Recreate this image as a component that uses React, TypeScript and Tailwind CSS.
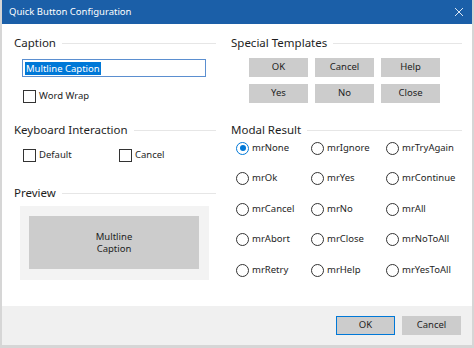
import React from "react";

const font = { fontFamily: '"Noto Sans", "Open Sans", sans-serif' };

const Header = ({ label }: { label: string }) => (
  <div className="flex items-center h-[18px]">
    <span className="text-[11.5px] text-[#1e1e1e] leading-none">{label}</span>
    <div className="flex-1 h-px bg-[#e6e6e6] ml-[6px]" />
  </div>
);

const Check = ({ label }: { label: string }) => (
  <div className="flex items-center h-[14px]">
    <div className="w-[13px] h-[13px] border border-[#333] bg-white" />
    <span className="ml-[3px] text-[9.5px] text-[#1e1e1e]">{label}</span>
  </div>
);

const Radio = ({ label, on }: { label: string; on?: boolean }) => (
  <div className="flex items-center h-[16px]">
    <div
      className={
        on
          ? "w-[13px] h-[13px] rounded-full border border-[#0078d7] flex items-center justify-center"
          : "w-[13px] h-[13px] rounded-full border border-[#333]"
      }
    >
      {on && <div className="w-[6px] h-[6px] rounded-full bg-[#0078d7]" />}
    </div>
    <span className="ml-[3px] text-[9.5px] text-[#1e1e1e]">{label}</span>
  </div>
);

const Btn = ({ label, focused }: { label: string; focused?: boolean }) => (
  <div
    className={
      focused
        ? "w-[59px] h-[19px] bg-[#cccccc] border border-[#0078d7] flex items-center justify-center text-[9.5px] text-[#1e1e1e]"
        : "w-[59px] h-[19px] bg-[#cccccc] flex items-center justify-center text-[9.5px] text-[#1e1e1e]"
    }
  >
    {label}
  </div>
);

const results = [
  ["mrNone", "mrIgnore", "mrTryAgain"],
  ["mrOk", "mrYes", "mrContinue"],
  ["mrCancel", "mrNo", "mrAll"],
  ["mrAbort", "mrClose", "mrNoToAll"],
  ["mrRetry", "mrHelp", "mrYesToAll"],
];

export default function App() {
  return (
    <div style={font} className="w-[474px] h-[348px] bg-white flex flex-col border-l-2 border-r-2 border-b-[3px] border-[#d6d6d6]">
      {/* Title bar */}
      <div className="h-[24px] bg-[#1b5fa8] flex items-center justify-between pl-[7px] pr-[8px]">
        <span className="text-white text-[9.5px]">Quick Button Configuration</span>
        <svg width="10" height="10" viewBox="0 0 10 10">
          <path d="M1 1 L9 9 M9 1 L1 9" stroke="#dbe6f3" strokeWidth="1" />
        </svg>
      </div>

      {/* Body */}
      <div className="h-[282px] flex pt-[10px] pl-[12px] pr-[10px]">
        {/* Left column */}
        <div className="w-[202px] flex flex-col">
          <Header label="Caption" />
          <div className="mt-[7px] ml-[8px] w-[184px] h-[18px] border border-[#5b8fd0] flex items-center pl-[2px]">
            <span className="bg-[#0078d7] text-white text-[9.5px] leading-[13px] px-px">Multline Caption</span>
          </div>
          <div className="mt-[12px] ml-[9px]">
            <Check label="Word Wrap" />
          </div>
          <div className="mt-[18px]">
            <Header label="Keyboard Interaction" />
          </div>
          <div className="mt-[9px] ml-[9px] flex">
            <div className="w-[96px]">
              <Check label="Default" />
            </div>
            <Check label="Cancel" />
          </div>
          <div className="mt-[22px]">
            <Header label="Preview" />
          </div>
          <div className="mt-[4px] ml-[6px] w-[189px] h-[74px] bg-[#f3f3f3] pt-[10px] pl-[9px]">
            <div className="w-[170px] h-[53px] bg-[#cccccc] flex items-center justify-center text-center text-[9.5px] leading-[12px] text-[#1e1e1e]">
              Multline
              <br />
              Caption
            </div>
          </div>
        </div>

        {/* Right column */}
        <div className="ml-[15px] flex-1 flex flex-col">
          <Header label="Special Templates" />
          <div className="mt-[6px] ml-[18px] grid grid-cols-[59px_59px_59px] gap-[7px]">
            <Btn label="OK" />
            <Btn label="Cancel" />
            <Btn label="Help" />
            <Btn label="Yes" />
            <Btn label="No" />
            <Btn label="Close" />
          </div>
          <div className="mt-[18px]">
            <Header label="Modal Result" />
          </div>
          <div className="mt-[1px] ml-[5px] grid grid-cols-[75px_75px_75px] gap-y-[14.5px]">
            {results.flat().map((r) => (
              <Radio key={r} label={r} on={r === "mrNone"} />
            ))}
          </div>
        </div>
      </div>

      {/* Footer */}
      <div className="flex-1 bg-[#f0f0f0] flex justify-end items-start pt-[10px] pr-[11px] gap-[7px]">
        <Btn label="OK" focused />
        <Btn label="Cancel" />
      </div>
    </div>
  );
}
